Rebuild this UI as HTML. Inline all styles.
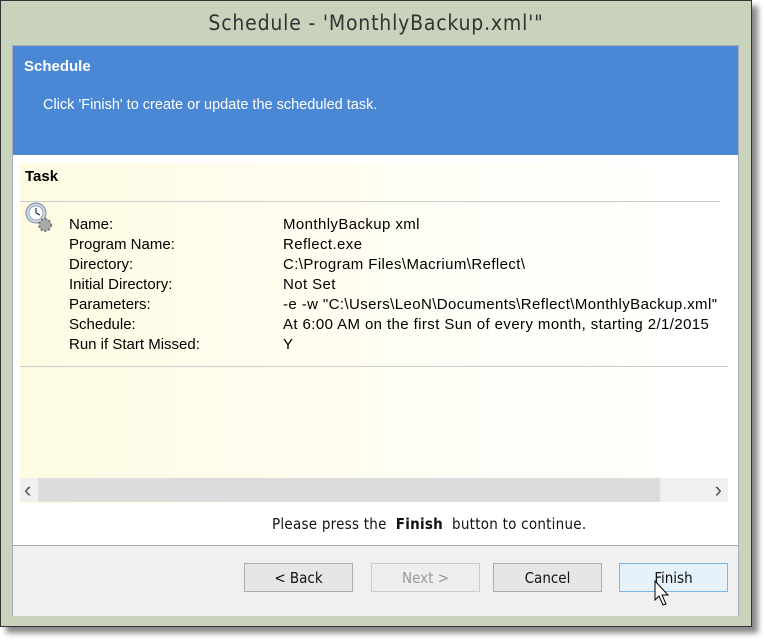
<!DOCTYPE html>
<html><head><style>
body{margin:0;width:764px;height:640px;background:#fff;position:relative;overflow:hidden;font-family:"Liberation Sans",sans-serif}
.shadow{position:absolute;left:6px;top:6px;width:752px;height:627px;background:#888;filter:blur(3px)}
.frame{position:absolute;left:0;top:0;width:750px;height:625px;background:#c9d2bb;border:1px solid #333}
.title{position:absolute;left:0;top:10px;width:750px;text-align:center;font-size:21px;color:#333;font-family:"DejaVu Sans Condensed","Liberation Sans",sans-serif;letter-spacing:0.8px}
.inner{position:absolute;left:11px;top:44px;width:725px;height:569px;background:#fff;border:1px solid #aab}
.hdr{position:absolute;left:0;top:0;width:725px;height:109px;background:#4a88d6;color:#fff}
.task{position:absolute;left:7px;top:117px;width:708px;height:340px;background:linear-gradient(90deg,#fefbe2,#fffef6 60%,#fff)}
.sb{position:absolute;left:7px;top:432px;width:708px;height:24px;background:#f0f0f0}
.row{position:absolute;font-size:15px;color:#000}
.btn{position:absolute;top:517px;width:109px;height:29px;border:1px solid #adadad;background:#e6e6e6;font-family:"DejaVu Sans Condensed",sans-serif;font-size:15px;text-align:center;line-height:29px;color:#111;box-sizing:border-box}
</style></head><body>
<div class="shadow"></div>
<div class="frame">
<div class="title">Schedule -  'MonthlyBackup.xml'"</div>
<div class="inner">
 <div class="hdr">
  <div style="position:absolute;left:11px;top:12px;font-size:15px;font-weight:bold">Schedule</div>
  <div style="position:absolute;left:30px;top:51px;font-size:14.5px">Click 'Finish' to create or update the scheduled task.</div>
 </div>
 <div class="task">
  <div style="position:absolute;left:5px;top:5px;font-size:15px;font-weight:bold">Task</div>
  <div style="position:absolute;left:0;top:38px;width:700px;height:1px;background:#ccc"></div>
  <div style="position:absolute;left:0;top:203px;width:708px;height:1px;background:#ccc"></div>
  <svg style="position:absolute;left:3px;top:38px" width="32" height="32"><circle cx="13" cy="12" r="10" fill="#cfd8e6" stroke="#7a8aa0"/><circle cx="13" cy="12" r="7" fill="#fff" stroke="#9ab"/><path d="M13 12L13 7M13 12L17 14" stroke="#345" stroke-width="1.3"/><circle cx="22" cy="24" r="6" fill="#aaa" stroke="#777" stroke-width="2" stroke-dasharray="2 2"/></svg>
 </div>
 <div class="sb">
  <div style="position:absolute;left:18px;top:0;width:622px;height:24px;background:#dcdcdc"></div>
  <div style="position:absolute;left:4px;top:0px;color:#555;font-size:22px;line-height:24px">‹</div>
  <div style="position:absolute;right:6px;top:0px;color:#555;font-size:22px;line-height:24px">›</div>
 </div>
 <div style="position:absolute;left:259px;top:469px;white-space:nowrap;font-size:15px;font-family:'DejaVu Sans Condensed',sans-serif;color:#111;letter-spacing:0.25px">Please press the &nbsp;<b>Finish</b>&nbsp; button to continue.</div>
 <div style="position:absolute;left:0;top:499px;width:725px;height:70px;background:#f0f0f0;border-top:1px solid #a0a8a8"></div>
 <div class="btn" style="left:231px">&lt; Back</div>
 <div class="btn" style="left:358px;color:#999;border-color:#ccc;background:#eee">Next &gt;</div>
 <div class="btn" style="left:480px">Cancel</div>
 <div class="btn" style="left:606px;background:#e5f1fb;border-color:#7eb4ea">Finish</div>
</div>
</div>
<div class="row" style="left:69px;top:215px;line-height:20px">Name:<br>Program Name:<br>Directory:<br>Initial Directory:<br>Parameters:<br>Schedule:<br>Run if Start Missed:</div>
<div class="row" style="left:283px;top:215px;line-height:20px;white-space:nowrap;letter-spacing:0.4px">MonthlyBackup xml<br>Reflect.exe<br>C:\Program Files\Macrium\Reflect\<br>Not Set<br>-e -w "C:\Users\LeoN\Documents\Reflect\MonthlyBackup.xml"<br>At 6:00 AM on the first Sun of every month, starting 2/1/2015<br>Y</div>
<svg style="position:absolute;left:654px;top:580px" width="18" height="28"><path d="M1 1L1 20L5 16L9 25L12 24L8 15L14 15Z" fill="#fff" stroke="#000"/></svg>
</body></html>
